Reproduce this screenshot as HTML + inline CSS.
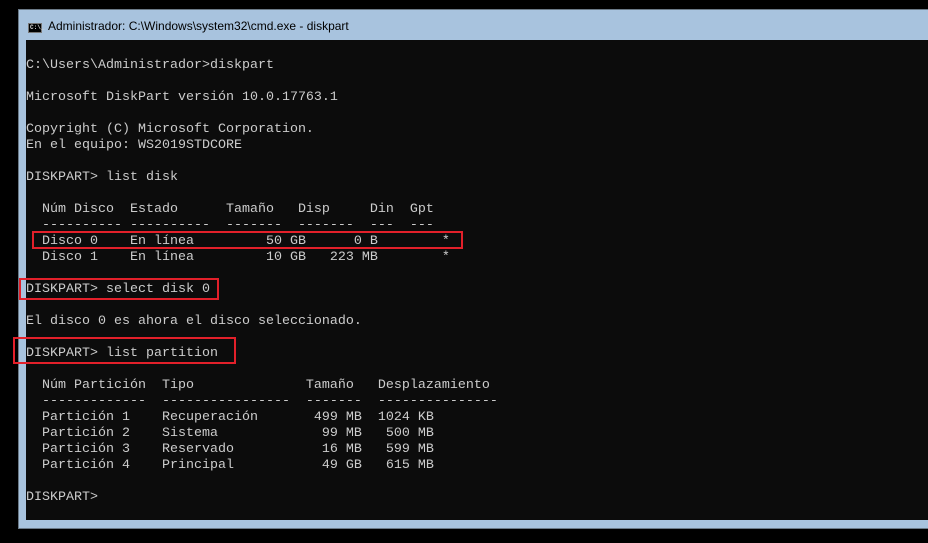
<!DOCTYPE html>
<html><head><meta charset="utf-8">
<style>
html,body{margin:0;padding:0;background:#000;width:928px;height:543px;overflow:hidden}
.win{position:absolute;left:18px;top:9px;width:920px;height:518px;background:#a8c3de;border:1px solid #6b7a88}
.title{position:absolute;left:29px;top:19px;font-family:"Liberation Sans",sans-serif;font-size:12px;color:#000;white-space:nowrap}
.icon{position:absolute;left:28px;top:23px;width:14px;height:10px;background:#000;border:1px solid #777;box-sizing:border-box}
.icon span{position:absolute;left:1px;top:0px;font:bold 6px "Liberation Mono",monospace;color:#ddd;line-height:7px}
.con{position:absolute;left:26px;top:40px;width:910px;height:480px;background:#0c0c0c}
pre{margin:0;position:absolute;left:26px;top:58px;font-family:"Liberation Mono",monospace;font-size:13.33px;line-height:16px;color:#cccccc}
.box{position:absolute;border:2px solid #e3202a;box-sizing:border-box}
</style></head><body>
<div class="win"></div>
<div class="icon"><span>C:\_</span></div>
<div class="title" style="left:48px">Administrador: C:\Windows\system32\cmd.exe - diskpart</div>
<div class="con"></div>
<pre>C:\Users\Administrador>diskpart

Microsoft DiskPart versión 10.0.17763.1

Copyright (C) Microsoft Corporation.
En el equipo: WS2019STDCORE

DISKPART> list disk

  Núm Disco  Estado      Tamaño   Disp     Din  Gpt
  ---------- ----------  -------  -------  ---  ---
  Disco 0    En línea         50 GB      0 B        *
  Disco 1    En línea         10 GB   223 MB        *

DISKPART> select disk 0

El disco 0 es ahora el disco seleccionado.

DISKPART> list partition

  Núm Partición  Tipo              Tamaño   Desplazamiento
  -------------  ----------------  -------  ---------------
  Partición 1    Recuperación       499 MB  1024 KB
  Partición 2    Sistema             99 MB   500 MB
  Partición 3    Reservado           16 MB   599 MB
  Partición 4    Principal           49 GB   615 MB

DISKPART>
</pre>
<div class="box" style="left:32px;top:231px;width:431px;height:18px"></div>
<div class="box" style="left:19px;top:278px;width:200px;height:22px"></div>
<div class="box" style="left:13px;top:337px;width:223px;height:27px"></div>
</body></html>
